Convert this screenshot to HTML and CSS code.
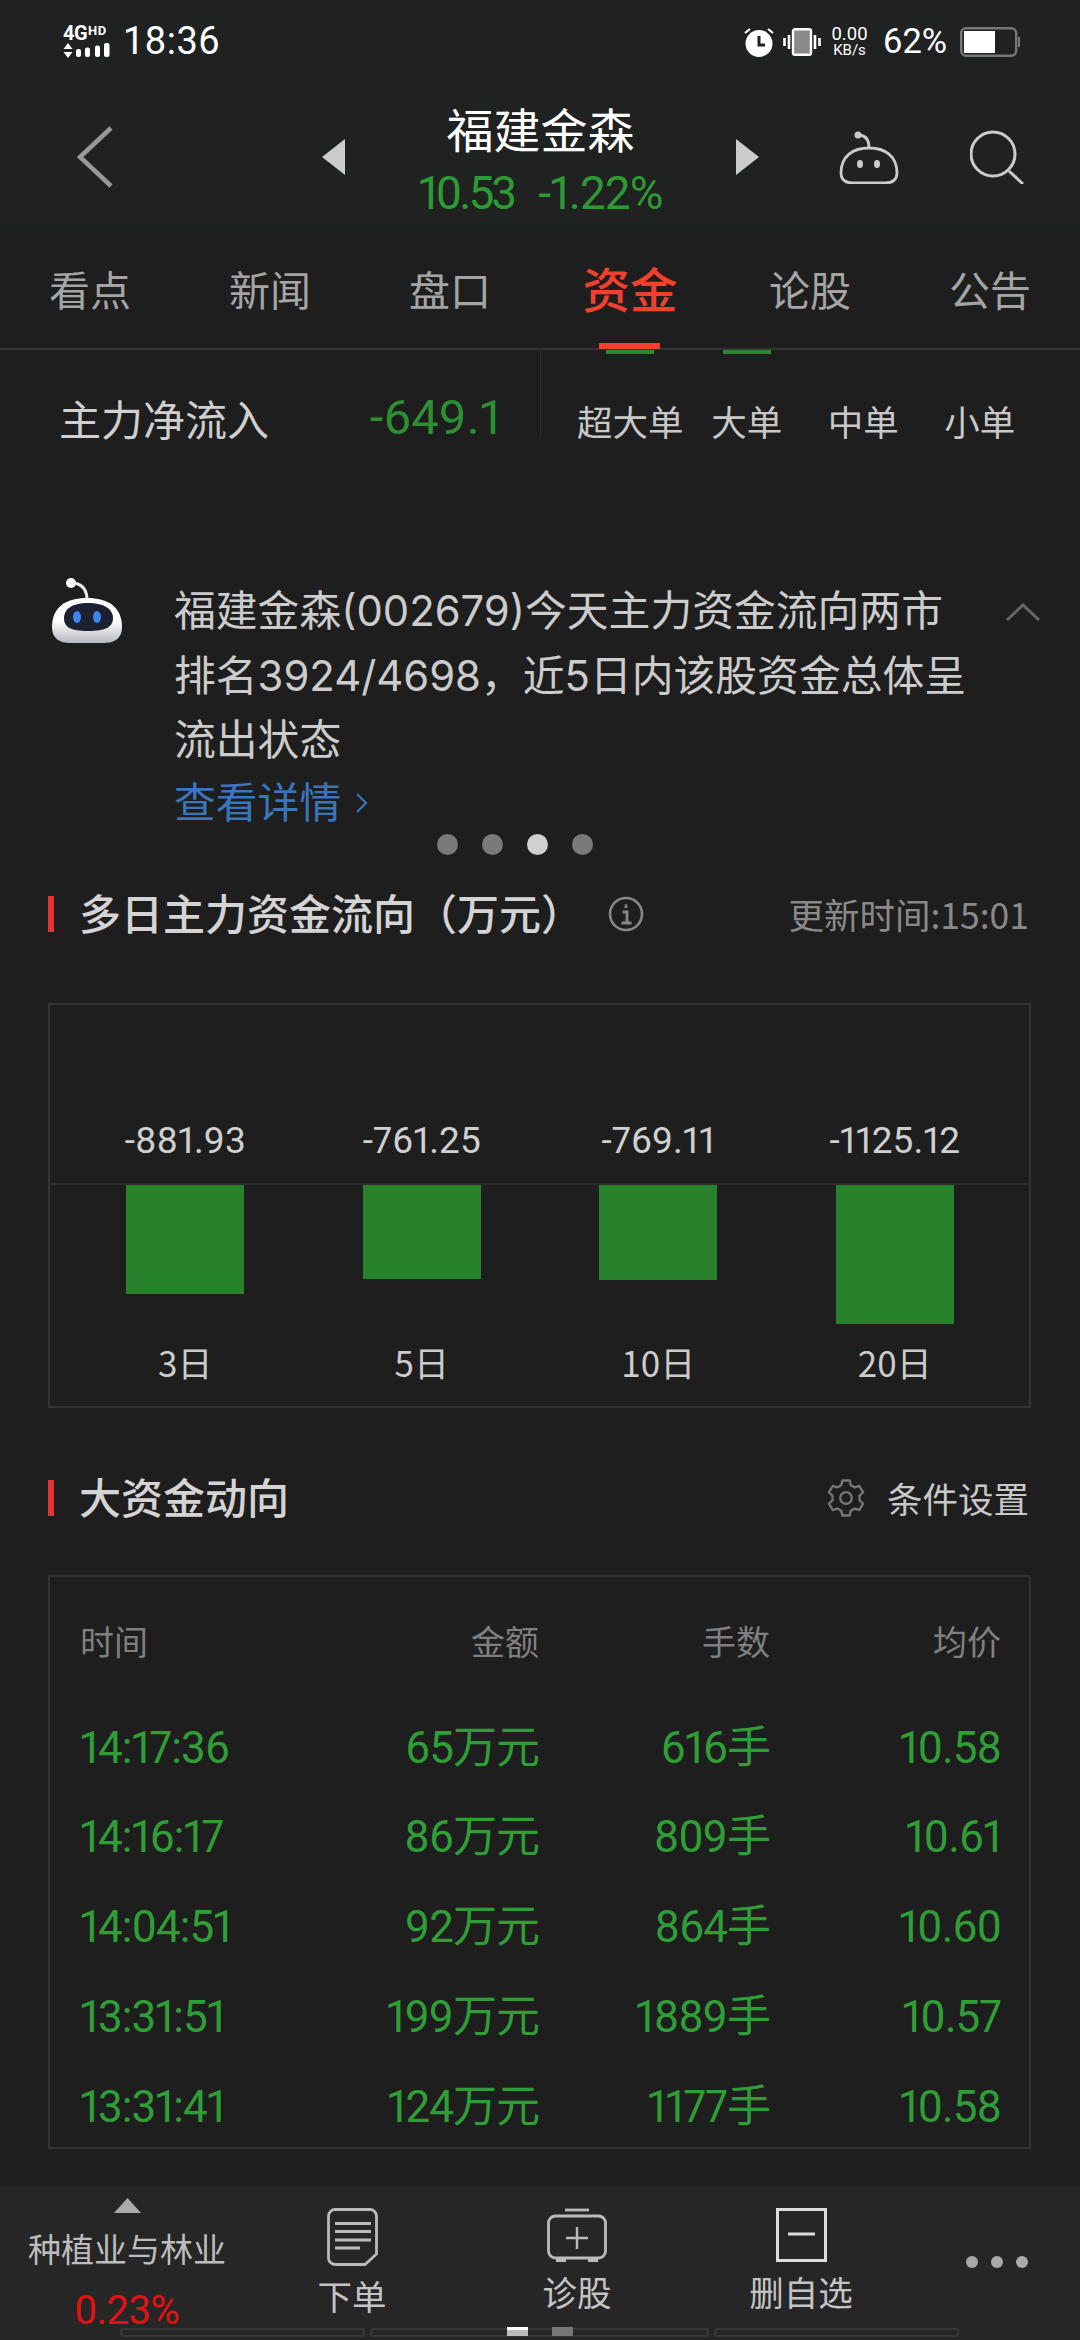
FILE: index.html
```html
<!DOCTYPE html>
<html lang="zh-CN">
<head>
<meta charset="utf-8">
<title>福建金森 资金</title>
<link rel="stylesheet" href="styles.css">
</head>
<body>
<div class="page">
  <header class="top">
    <div class="status">
      <div class="net">
        <div class="net-type"><span class="net-4g">4G</span><span class="net-hd">HD</span></div>
        <svg class="net-sig" width="47" height="15" viewBox="0 0 47 15"><path fill="#fff" d="M5 0l4.500 6h-9zM5 15L.5 9h9z"/><rect x="13" y="6" width="5" height="8" rx="2" fill="#fff"/><rect x="22" y="4.500" width="5" height="9.500" rx="2" fill="#fff"/><rect x="32" y="2.500" width="5" height="11.500" rx="2" fill="#fff"/><rect x="41" y="0" width="5.500" height="14" rx="2" fill="#fff"/></svg>
      </div>
      <span class="clock">18:36</span>
      <div class="status-right">
        <svg width="30" height="30" viewBox="0 0 30 30"><circle cx="15" cy="16.500" r="13.500" fill="#fff"/><path d="M1 6l5-4M29 6l-5-4" stroke="#fff" stroke-width="2.200"/><path d="M15 9v9h6" fill="none" stroke="#202222" stroke-width="3"/></svg>
        <svg class="vib" width="38" height="28" viewBox="0 0 38 28"><rect x="10" y="1.200" width="18" height="25.600" rx="2" fill="#8a8a8a" stroke="#fff" stroke-width="2.400"/><path d="M6 7v14M1.500 10v8M32 7v14M36.500 10v8" stroke="#fff" stroke-width="2.600"/></svg>
        <div class="speed"><span>0.00</span><small>KB/s</small></div>
        <span class="pct">62%</span>
        <svg width="60" height="30" viewBox="0 0 60 30"><rect x="1.200" y="1.200" width="55" height="27.600" rx="5" fill="none" stroke="#777" stroke-width="2.400"/><rect x="4" y="4" width="31" height="22" fill="#fff"/><path d="M59 10v10" stroke="#777" stroke-width="2"/></svg>
      </div>
    </div>
    <nav class="nav">
      <svg class="back" width="36" height="62" viewBox="0 0 36 62"><path d="M34 2L3 31l31 29" fill="none" stroke="#999" stroke-width="4.500"/></svg>
      <svg class="tri" width="23" height="36" viewBox="0 0 23 36"><path d="M23 0v36L0 18z" fill="#ccc"/></svg>
      <div class="nav-title">
        <h1>福建金森</h1>
        <p class="num"><span>10.53</span><span>-1.22%</span></p>
      </div>
      <svg class="tri" width="23" height="36" viewBox="0 0 23 36"><path d="M0 0v36l23-18z" fill="#ccc"/></svg>
      <svg class="bot-line" width="60" height="53" viewBox="0 0 60 53"><circle cx="19" cy="4" r="3.500" fill="#ccc"/><path d="M19 4c7 0 11 4 11 13M2 42C2 25 14 17 30 17s28 8 28 25c0 8-6 10-12 10H14C8 52 2 50 2 42z" fill="none" stroke="#ccc" stroke-width="2.800"/><ellipse cx="21" cy="33" rx="3" ry="4" fill="#ccc"/><ellipse cx="38" cy="33" rx="3" ry="4" fill="#ccc"/></svg>
      <svg class="search" width="54" height="54" viewBox="0 0 54 54"><circle cx="23" cy="24" r="22" fill="none" stroke="#ccc" stroke-width="3"/><path d="M39 41l14 13" stroke="#ccc" stroke-width="3"/></svg>
    </nav>
  </header>

  <div class="tabs">
    <span>看点</span><span>新闻</span><span>盘口</span><span class="on">资金</span><span>论股</span><span>公告</span>
  </div>

  <section class="flow">
    <div class="flow-main">
      <span class="flow-label">主力净流入</span>
      <span class="flow-value num">-649.1</span>
    </div>
    <div class="flow-kinds">
      <span class="mark">超大单</span><span class="mark">大单</span><span>中单</span><span>小单</span>
    </div>
  </section>

  <section class="insight">
    <svg class="bot" width="70" height="67" viewBox="0 0 70 67">
      <defs><linearGradient id="head" x1="0" y1="0" x2="0" y2="1"><stop offset="0.500" stop-color="#fff"/><stop offset="1" stop-color="#b5b8c0"/></linearGradient></defs>
      <circle cx="19" cy="6" r="5" fill="#fff"/>
      <path d="M19 6c9 0 15 4 16 15" fill="none" stroke="#eee" stroke-width="3"/>
      <path d="M0 50C0 30 14 21 35 21s35 9 35 29c0 12-8 16-18 16H18C8 66 0 62 0 50z" fill="url(#head)"/>
      <path d="M12 41c0-10 10-15 24-15s25 5 25 15c0 9-7 13-25 13S12 50 12 41z" fill="#1c2030"/>
      <ellipse cx="25" cy="40" rx="4" ry="6" fill="#3d85ef"/><ellipse cx="45" cy="40" rx="4" ry="6" fill="#3d85ef"/>
    </svg>
    <div class="insight-text">
      <p>福建金森(002679)今天主力资金流向两市<br>排名3924/4698，近5日内该股资金总体呈<br>流出状态</p>
      <a class="more">查看详情<svg width="13" height="22" viewBox="0 0 13 22"><path d="M2 2l9 9-9 9" fill="none" stroke="#3a76bb" stroke-width="2.200"/></svg></a>
    </div>
    <svg class="fold" width="34" height="18" viewBox="0 0 34 18"><path d="M1 17L17 2l16 15" fill="none" stroke="#666" stroke-width="3"/></svg>
  </section>

  <div class="dots"><i></i><i></i><i class="on"></i><i></i></div>

  <section class="head-a sec-head">
    <h2>多日主力资金流向（万元）</h2>
    <svg class="info" width="36" height="36" viewBox="0 0 36 36"><circle cx="18" cy="18" r="16" fill="none" stroke="#888" stroke-width="2.600"/><path d="M18 8.500v3.500M14.500 16h4.500v11M13.500 27h10" fill="none" stroke="#888" stroke-width="2.800"/></svg>
    <span class="updated">更新时间:15:01</span>
  </section>

  <section class="box chart">
    <div class="chart-vals num">
      <span>-881.93</span><span>-761.25</span><span>-769.11</span><span>-1125.12</span>
    </div>
    <div class="chart-bars">
      <i style="height:109px"></i><i style="height:94px"></i><i style="height:95px"></i><i style="height:139px"></i>
    </div>
    <div class="chart-days">
      <span>3日</span><span>5日</span><span>10日</span><span>20日</span>
    </div>
  </section>

  <section class="head-b sec-head">
    <h2>大资金动向</h2>
    <div class="cond">
      <svg width="38" height="38" viewBox="0 0 36 36"><path d="M14.500 1.400h7l.9 4.400 4 2.200 4.200-1.400 3.600 6.100-3.400 3v4.600l3.400 3-3.600 6.100-4.200-1.400-4 2.200-.9 4.400h-7l-.9-4.400-4-2.200-4.200 1.400-3.600-6.100 3.400-3v-4.600l-3.400-3 3.600-6.100 4.200 1.400 4-2.200z" fill="none" stroke="#777" stroke-width="2.200" stroke-linejoin="round"/><circle cx="18" cy="18" r="5.500" fill="none" stroke="#777" stroke-width="2.200"/></svg>
      <span>条件设置</span>
    </div>
  </section>

  <section class="box trades">
    <div class="tr th"><span>时间</span><span>金额</span><span>手数</span><span>均价</span></div>
    <div class="tr"><span>14:17:36</span><span>65万元</span><span>616手</span><span>10.58</span></div>
    <div class="tr"><span>14:16:17</span><span>86万元</span><span>809手</span><span>10.61</span></div>
    <div class="tr"><span>14:04:51</span><span>92万元</span><span>864手</span><span>10.60</span></div>
    <div class="tr"><span>13:31:51</span><span>199万元</span><span>1889手</span><span>10.57</span></div>
    <div class="tr"><span>13:31:41</span><span>124万元</span><span>1177手</span><span>10.58</span></div>
  </section>

  <footer class="bar">
    <div class="bar-row">
      <div class="sector">
        <svg width="27" height="15" viewBox="0 0 27 15"><path d="M13.500 0L27 15H0z" fill="#aaa"/></svg>
        <span class="sector-name">种植业与林业</span>
        <span class="sector-pct">0.23%</span>
      </div>
      <div class="act">
        <svg width="51" height="58" viewBox="0 0 51 58"><path d="M8 1.500h35a6.500 6.500 0 0 1 6.500 6.500v38L38 56.500H8A6.500 6.500 0 0 1 1.500 50V8A6.500 6.500 0 0 1 8 1.500z" fill="none" stroke="#bbb" stroke-width="2.800"/><path d="M8 15.500h36M8 23.500h36M8 32h36M8 40h25" stroke="#bbb" stroke-width="2.800"/></svg>
        <span>下单</span>
      </div>
      <div class="act">
        <svg width="60" height="54" viewBox="0 0 60 54"><path d="M18 2h24" stroke="#bbb" stroke-width="2.800"/><rect x="1.500" y="8" width="57" height="42" rx="7" fill="none" stroke="#bbb" stroke-width="2.800"/><path d="M30 19v22M19 30h22" stroke="#bbb" stroke-width="2.400"/><path d="M9 50h10v4H9zM41 50h10v4H41z" fill="#bbb"/></svg>
        <span>诊股</span>
      </div>
      <div class="act">
        <svg width="51" height="54" viewBox="0 0 51 54"><rect x="1.500" y="1.500" width="48" height="51" fill="none" stroke="#ddd" stroke-width="3"/><path d="M12 26h27" stroke="#ddd" stroke-width="3"/></svg>
        <span>删自选</span>
      </div>
      <div class="more-dots"><i></i><i></i><i></i></div>
    </div>
    <div class="pager">
      <div class="seg s1"></div>
      <div class="seg s2"><i class="pip on"></i><i class="pip"></i></div>
      <div class="seg s1"></div>
    </div>
  </footer>
</div>
</body>
</html>
```
FILE: styles.css
```css
* { box-sizing: border-box; margin: 0; padding: 0; }
html, body { width: 1080px; height: 2340px; overflow: hidden; background: #1e1e1e; }
body { font-family: "Noto Sans CJK SC", "Roboto", sans-serif; color: #ccc; }
i { display: block; }
.num { font-family: "Roboto", "Noto Sans CJK SC", sans-serif; font-variant-numeric: proportional-nums; }
.page { width: 1080px; height: 2340px; overflow: hidden; display: flex; flex-direction: column; }

/* status + nav */
.top { background: #202222; height: 230px; flex: none; }
.status { height: 84px; display: flex; align-items: flex-start; padding: 26px 60px 0 63px; color: #fff; font-family: "Roboto", sans-serif; }
.net { width: 47px; display: flex; flex-direction: column; gap: 3px; font-weight: 700; }
.net-type { display: flex; align-items: flex-start; height: 14px; }
.net-4g { font-size: 20px; line-height: 14px; letter-spacing: -.5px; }
.net-hd { font-size: 13px; line-height: 10px; margin-left: 1px; letter-spacing: .5px; }
.clock { font-size: 38px; line-height: 30px; margin-left: 13px; letter-spacing: .5px; }
.status-right { margin-left: auto; display: flex; align-items: center; height: 31px; }
.vib { margin-left: 9px; }
.speed { margin-left: 10px; width: 37px; display: flex; flex-direction: column; align-items: center; font-size: 18.500px; line-height: 17px; }
.speed small { font-size: 15px; line-height: 14px; }
.pct { font-size: 34.500px; line-height: 31px; margin-left: 15px; width: 64px; white-space: nowrap; }
.pct + svg { margin-left: 13px; }

.nav { height: 146px; display: flex; align-items: center; padding-left: 77px; }
.back { margin-right: 209px; }
.nav-title { width: 391px; text-align: center; }
.nav-title h1 { font-size: 47px; line-height: 56px; font-weight: 400; color: #fff; }
.nav-title p { display: flex; justify-content: center; gap: 24px; font-size: 46px; line-height: 44px; margin-top: 15px; color: #2d9a33; letter-spacing: -1px; }
.nav-title p span:first-child { letter-spacing: -3px; }
.bot-line { margin-left: 80px; }
.search { margin-left: 71px; }

/* tabs */
.tabs { height: 120px; display: grid; grid-template-columns: repeat(6, 180px); align-items: center; border-bottom: 2px solid #333; font-size: 41px; color: #a5a5a5; text-align: center; flex: none; }
.tabs span { position: relative; line-height: 116px; height: 118px; }
.tabs .on { color: #f0412f; font-size: 47.500px; font-weight: 500; }
.tabs .on::after { content: ""; position: absolute; left: 59px; top: 113px; width: 61px; height: 6px; background: #f0412f; }

/* flow */
.flow { display: flex; height: 227px; align-items: flex-start; flex: none; }
.flow-main { width: 541px; height: 86px; padding: 50px 39px 0 59px; display: flex; justify-content: space-between; align-items: center; border-right: 1px solid #2c2c2c; }
.flow-label { font-size: 42px; line-height: 36px; color: #d0d0d0; }
.flow-value { font-size: 49px; line-height: 36px; color: #2d8f33; }
.flow-kinds { margin-left: 31px; display: grid; grid-template-columns: repeat(4, 116.500px); font-size: 35.500px; line-height: 34px; text-align: center; padding-top: 54px; color: #c8c8c8; }
.flow-kinds span { position: relative; }
.flow-kinds .mark::before { content: ""; position: absolute; left: 50%; top: -54px; width: 48px; margin-left: -24px; height: 4px; background: #2b8a30; }

/* insight */
.insight { display: flex; align-items: flex-start; padding: 0 40px 0 52px; flex: none; }
.bot { flex: none; }
.insight-text { margin: 2px 0 0 54px; flex: none; font-family: "Inter", "Noto Sans CJK SC", sans-serif; font-size: 41.800px; line-height: 64.500px; color: #ccc; white-space: nowrap; }
.insight-text p { margin-left: -2px; }
.more { display: flex; align-items: center; gap: 14px; color: #3a76bb; line-height: 60px; height: 60px; margin-left: -2px; }
.fold { margin: 26px 0 0 auto; flex: none; }

.dots { display: flex; gap: 24px; margin: 1px 0 0 437px; height: 21px; flex: none; }
.dots i { width: 21px; height: 21px; border-radius: 50%; background: #7a7a7a; }
.dots i.on { background: #d0d0d0; }

/* section heads */
.sec-head { display: flex; align-items: center; height: 38px; padding: 0 51px 0 48px; flex: none; }
.sec-head h2 { font-size: 42px; line-height: 38px; font-weight: 500; color: #d4d4d4; border-left: 6px solid #e33333; padding: 0 0 4px 25px; height: 36px; display: flex; align-items: center; white-space: nowrap; }
.head-a { margin-top: 40px; }
.head-b { margin-top: 71px; }
.info { margin-left: 25px; }
.updated { margin-left: auto; font-size: 35.500px; color: #8a8a8a; white-space: nowrap; }
.cond { margin-left: auto; display: flex; align-items: center; gap: 22px; font-size: 35.500px; color: #c8c8c8; }

/* boxes */
.box { border: 2px solid #333; margin: 0 49px 0 48px; flex: none; }
.chart { margin-top: 70px; height: 405px; }
.chart-vals, .chart-bars, .chart-days { display: grid; grid-template-columns: repeat(4, 236.500px); padding-left: 17px; text-align: center; }
.chart-vals { height: 180px; border-bottom: 2px solid #2c2c2c; align-items: end; padding-bottom: 22px; font-size: 37px; line-height: 40px; color: #d0d0d0; }
.chart-bars { height: 139px; align-items: start; }
.chart-bars i { width: 118px; margin-left: 59px; background: #27822b; }
.chart-days { margin-top: 17px; font-size: 35px; line-height: 42px; color: #ccc; }

.trades { margin-top: 58.500px; height: 574px; padding: 24px 28px 0 30px; }
.tr { display: grid; grid-template-columns: 200px 259px 231px 231px; height: 80px; align-items: center; font-size: 44px; line-height: 50px; color: #2f9e37; font-family: "Roboto", "Noto Sans CJK SC", sans-serif; font-variant-numeric: proportional-nums; letter-spacing: -1px; margin-bottom: 9.800px; }
.tr span { text-align: right; }
.tr span:first-child { text-align: left; }
.tr.th { font-size: 34px; color: #808080; margin-bottom: 26.500px; letter-spacing: 0; font-family: "Noto Sans CJK SC", sans-serif; }

/* bottom bar */
.bar { margin-top: 37px; height: 154px; background: #262626; flex: none; }
.bar-row { height: 142px; display: grid; grid-template-columns: 254px 196px 254px 194px 182px; }
.sector { display: flex; flex-direction: column; align-items: center; padding-top: 12px; }
.sector-name { font-size: 33px; line-height: 40px; margin-top: 15px; color: #bdbdbd; }
.sector-pct { font-size: 40px; line-height: 40px; margin-top: 23px; color: #e31212; font-family: "Roboto", sans-serif; letter-spacing: -.5px; }
.act { display: flex; flex-direction: column; align-items: center; padding-top: 22px; font-size: 34.500px; line-height: 40px; color: #c4c4c4; }
.act span { margin-top: 9px; }
.more-dots { display: flex; gap: 13px; padding: 70px 0 0 68px; }
.more-dots i { width: 12px; height: 12px; border-radius: 50%; background: #aaa; }
.pager { display: flex; gap: 5px; padding-left: 120px; }
.seg { height: 9px; border: 2px solid #383838; border-radius: 4px; display: flex; }
.s1 { width: 245px; }
.s2 { width: 339px; padding-left: 135px; gap: 24px; }
.pip { width: 21px; height: 9px; margin-top: -3px; background: #777; }
.pip.on { background: linear-gradient(#fff 30%, #bbb 30%); }
```
